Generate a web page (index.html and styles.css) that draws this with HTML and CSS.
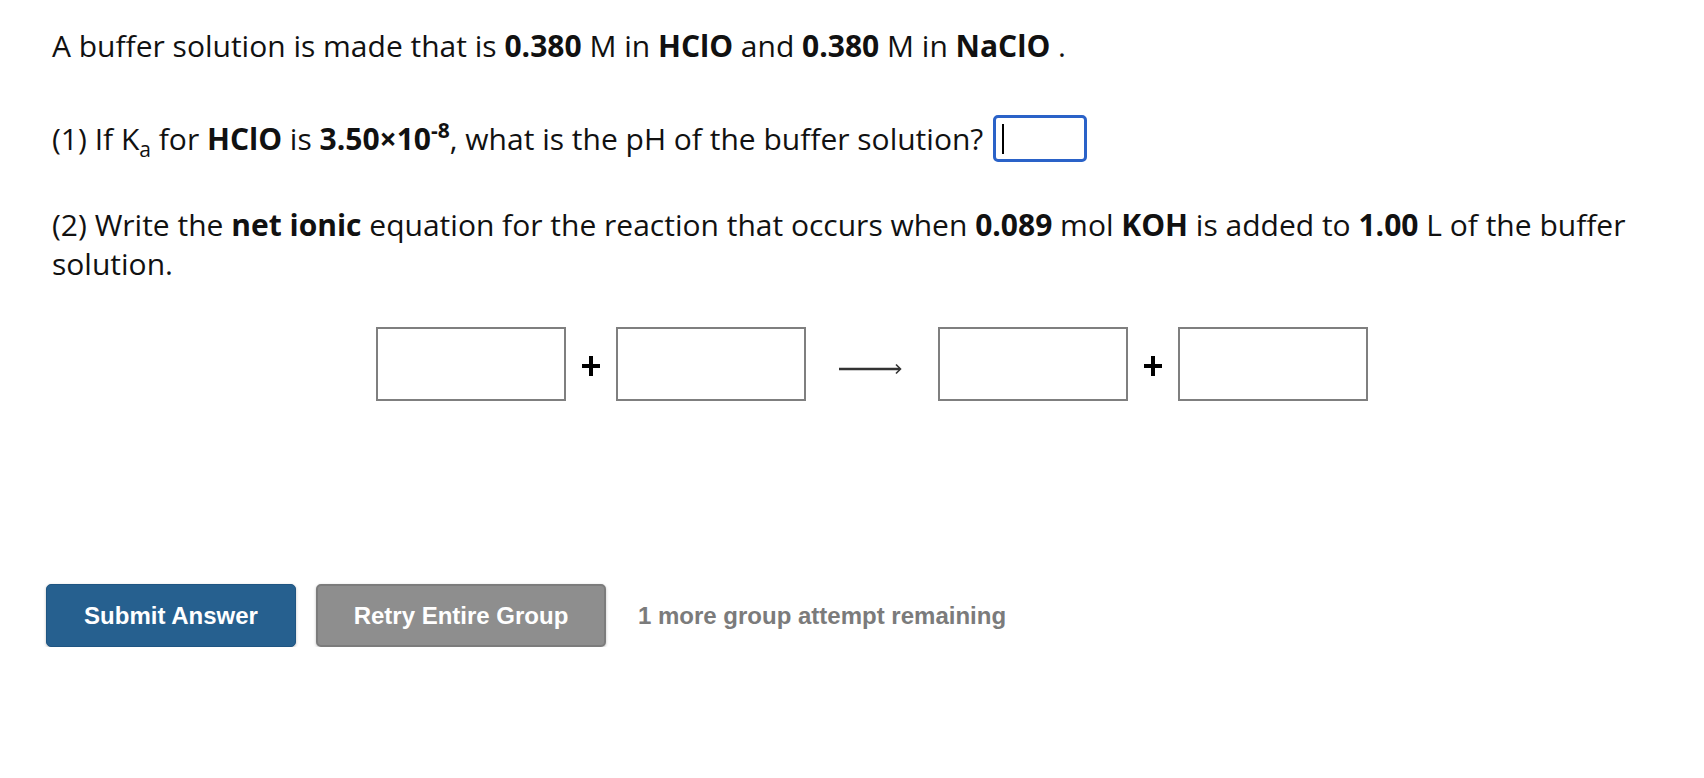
FILE: index.html
```html
<!DOCTYPE html>
<html>
<head>
<meta charset="utf-8">
<link rel="stylesheet" href="styles.css">
</head>
<body>
<div class="page">
  <p class="line first">A buffer solution is made that is <b>0.380</b> M in <b>HClO</b> and <b>0.380</b> M in <b>NaClO</b> .</p>
  <div class="q1">
    <span>(1) If K<sub>a</sub> for <b>HClO</b> is <b>3.50×10<sup>-8</sup></b>, what is the pH of the buffer solution?</span>
    <span class="answer"><span class="caret"></span></span>
  </div>
  <p class="line q2">(2) Write the <b>net ionic</b> equation for the reaction that occurs when <b>0.089</b> mol <b>KOH</b> is added to <b>1.00</b> L of the buffer<br><span>solution.</span></p>
  <div class="equation">
    <span class="box"></span>
    <span class="plus"><svg width="20" height="22" viewBox="0 0 20 22"><path d="M10 1V21M1 11H19" stroke="#000" stroke-width="4"/></svg></span>
    <span class="box"></span>
    <span class="arrow"><svg width="64" height="14" viewBox="0 0 64 14"><path d="M0 7H61" stroke="#333" stroke-width="2.4"/><path d="M57 2.5L61.5 7L57 11.5" stroke="#333" stroke-width="1.6" fill="none"/></svg></span>
    <span class="box"></span>
    <span class="plus"><svg width="20" height="22" viewBox="0 0 20 22"><path d="M10 1V21M1 11H19" stroke="#000" stroke-width="4"/></svg></span>
    <span class="box"></span>
  </div>
  <div class="actions">
    <button class="btn submit">Submit Answer</button>
    <button class="btn retry">Retry Entire Group</button>
    <span class="remaining">1 more group attempt remaining</span>
  </div>
</div>
</body>
</html>
```
FILE: styles.css
```css
html, body {
  margin: 0;
  padding: 0;
  background: #fff;
}
.page {
  padding: 26px 0 0 52px;
  font-family: "Open Sans", "Noto Sans", sans-serif;
  font-size: 30px;
  color: #111;
}
.line {
  margin: 0;
  line-height: 39px;
}
b {
  font-weight: 700;
}
.q1 {
  margin-top: 50px;
  height: 47px;
  display: flex;
  align-items: center;
  gap: 10px;
  line-height: 39px;
}
sub, sup {
  font-size: 21px;
  line-height: 0;
}
sub { vertical-align: -7px; }
sup { vertical-align: 12px; }
.answer {
  width: 82px;
  height: 41px;
  border: 3px solid #2a62c8;
  border-radius: 5px;
  display: flex;
  align-items: center;
  padding-left: 6px;
  box-sizing: content-box;
}
.caret {
  width: 2px;
  height: 30px;
  background: #000;
}
.q2 {
  margin-top: 43px;
  padding-right: 40px;
}
.equation {
  margin-top: 44px;
  margin-left: 324px;
  display: flex;
  align-items: center;
}
.box {
  width: 186px;
  height: 70px;
  border: 2px solid #7f7f7f;
}
.plus {
  width: 50px;
  display: flex;
  justify-content: center;
  padding-top: 4px;
}
.arrow {
  width: 130px;
  display: flex;
  justify-content: center;
  padding-top: 10px;
  padding-right: 2px;
}
.actions {
  margin-top: 183px;
  margin-left: -6px;
  display: flex;
  align-items: center;
}
.btn {
  height: 63px;
  border-radius: 5px;
  font-family: "Liberation Sans", Arial, sans-serif;
  font-weight: 700;
  font-size: 24px;
  color: #fff;
  cursor: pointer;
  box-shadow: 0 1px 3px rgba(0,0,0,0.25);
}
.submit {
  width: 250px;
  background: #26608f;
  border: 1px solid #1f5582;
}
.retry {
  width: 290px;
  margin-left: 20px;
  background: #8e8e8e;
  border: 2px solid #7c7c7c;
}
.remaining {
  margin-left: 32px;
  font-family: "Liberation Sans", Arial, sans-serif;
  font-weight: 700;
  font-size: 24px;
  color: #7b7b7b;
}
```
